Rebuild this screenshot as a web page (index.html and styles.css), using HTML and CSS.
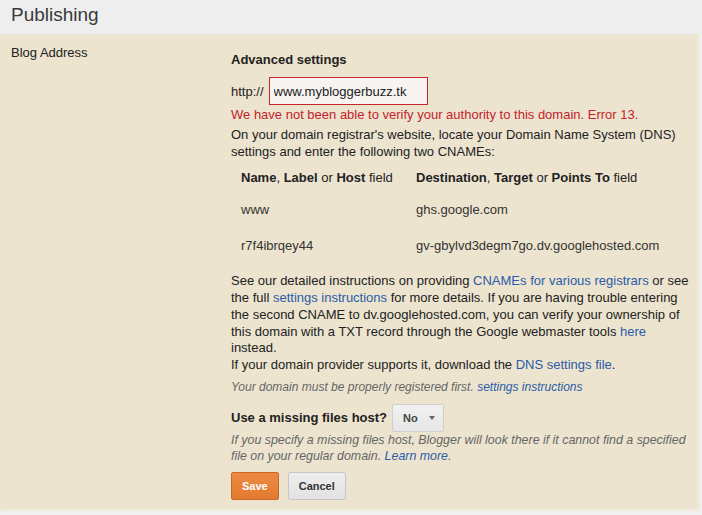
FILE: index.html
```html
<!DOCTYPE html>
<html lang="en">
<head>
<meta charset="utf-8">
<title>Publishing</title>
<link rel="stylesheet" href="styles.css">
</head>
<body>
<div class="page">
  <header class="title">Publishing</header>
  <section class="panel">
    <div class="label">Blog Address</div>
    <div class="content">
      <h3 class="heading">Advanced settings</h3>
      <div class="address-row">
        <span class="prefix">http://</span>
        <input class="address-input" type="text" value="www.mybloggerbuzz.tk">
      </div>
      <p class="error">We have not been able to verify your authority to this domain. Error 13.</p>
      <p class="text intro">On your domain registrar's website, locate your Domain Name System (DNS) settings and enter the following two CNAMEs:</p>
      <table class="cnames">
        <thead>
          <tr>
            <th class="col-name"><b>Name</b>, <b>Label</b> or <b>Host</b> field</th>
            <th><b>Destination</b>, <b>Target</b> or <b>Points To</b> field</th>
          </tr>
        </thead>
        <tbody>
          <tr>
            <td>www</td>
            <td>ghs.google.com</td>
          </tr>
          <tr>
            <td>r7f4ibrqey44</td>
            <td>gv-gbylvd3degm7go.dv.googlehosted.com</td>
          </tr>
        </tbody>
      </table>
      <p class="text instructions">See our detailed instructions on providing <a href="#">CNAMEs for various registrars</a> or see the full <a href="#">settings instructions</a> for more details. If you are having trouble entering the second CNAME to dv.googlehosted.com, you can verify your ownership of this domain with a TXT record through the Google webmaster tools <a href="#">here</a> instead.<br>If your domain provider supports it, download the <a href="#">DNS settings file</a>.</p>
      <p class="note">Your domain must be properly registered first. <a href="#">settings instructions</a></p>
      <div class="missing-row">
        <span class="missing-label">Use a missing files host?</span>
        <button class="dropdown" type="button">No <span class="caret"></span></button>
      </div>
      <p class="note help">If you specify a missing files host, Blogger will look there if it cannot find a specified file on your regular domain. <a href="#">Learn more</a>.</p>
      <div class="actions">
        <button class="btn btn-save" type="button">Save</button>
        <button class="btn btn-cancel" type="button">Cancel</button>
      </div>
    </div>
  </section>
</div>
</body>
</html>
```
FILE: styles.css
```css
html, body {
  margin: 0;
  padding: 0;
}

body {
  background: #f0f0f0;
  font-family: "Liberation Sans", Arial, sans-serif;
  font-size: 13px;
  color: #222;
}

.page {
  width: 702px;
  height: 515px;
  overflow: hidden;
}

.title {
  height: 34px;
  line-height: 30px;
  padding-left: 11px;
  font-size: 19px;
  color: #3a3a3a;
  background: #eeeeee;
  box-sizing: border-box;
}

.panel {
  display: flex;
  width: 700px;
  box-sizing: border-box;
  background: #ece4ce;
  border: 1px solid #ebe5d6;
  border-right: 3px solid #efe9da;
  border-bottom: 3px solid #efe9da;
  padding: 10px 0 8px 10px;
}

.label {
  width: 220px;
  flex: none;
  line-height: 16px;
  color: #222;
}

.content {
  width: 462px;
  padding-top: 7px;
}

.heading {
  margin: 0;
  font-size: 13px;
  line-height: 16px;
  font-weight: bold;
  color: #222;
}

.address-row {
  display: flex;
  align-items: center;
  gap: 5px;
  margin-top: 9px;
}

.prefix {
  color: #222;
}

.address-input {
  width: 159px;
  height: 28px;
  box-sizing: border-box;
  border: 1px solid #c8232c;
  background: #f7f4f1;
  padding: 0 4px;
  font-family: "Liberation Sans", Arial, sans-serif;
  font-size: 13px;
  color: #222;
  margin: 0;
}

.error {
  margin: 1px 0 0;
  line-height: 17px;
  color: #c5222b;
}

.text {
  margin: 1px 0 0;
  line-height: 16.7px;
  color: #222;
}

.intro {
  margin-top: 4px;
}

.cnames {
  border-collapse: collapse;
  margin-top: 1px;
}

.cnames th {
  text-align: left;
  font-weight: normal;
  padding: 8px 10px 7px;
  line-height: 17px;
  color: #222;
}

.cnames th b {
  font-weight: bold;
}

.cnames .col-name {
  width: 155px;
}

.cnames td {
  padding: 8px 10px 11px;
  line-height: 17px;
  color: #333;
}

.instructions {
  margin-top: 8px;
}

a {
  color: #2b5ca8;
  text-decoration: none;
}

.note {
  margin: 5px 0 0;
  font-size: 12px;
  font-style: italic;
  line-height: 16px;
  color: #666;
}

.missing-row {
  display: flex;
  align-items: center;
  gap: 5px;
  margin-top: 9px;
}

.missing-label {
  font-weight: bold;
  color: #222;
}

.dropdown {
  width: 52px;
  height: 28px;
  box-sizing: border-box;
  margin: 0;
  padding: 0 0 0 10px;
  display: flex;
  align-items: center;
  gap: 11px;
  border: 1px solid #cfcfcf;
  border-radius: 2px;
  background: linear-gradient(#f1f1f1, #e6e6e6);
  font-family: "Liberation Sans", Arial, sans-serif;
  font-size: 11px;
  font-weight: bold;
  color: #444;
}

.caret {
  width: 0;
  height: 0;
  border-left: 3px solid transparent;
  border-right: 3px solid transparent;
  border-top: 4px solid #666;
}

.help {
  margin-top: 0;
  font-size: 12.4px;
}

.actions {
  display: flex;
  gap: 9px;
  margin-top: 8px;
}

.btn {
  height: 28px;
  box-sizing: border-box;
  margin: 0;
  padding: 0 10px;
  border-radius: 2px;
  font-family: "Liberation Sans", Arial, sans-serif;
  font-size: 11px;
  font-weight: bold;
}

.btn-save {
  background: linear-gradient(#ec8a42, #e47a30);
  border: 1px solid #c9672a;
  color: #fff;
}

.btn-cancel {
  background: linear-gradient(#eeeeee, #e2e2e2);
  border: 1px solid #c6c6c6;
  color: #333;
}
```
